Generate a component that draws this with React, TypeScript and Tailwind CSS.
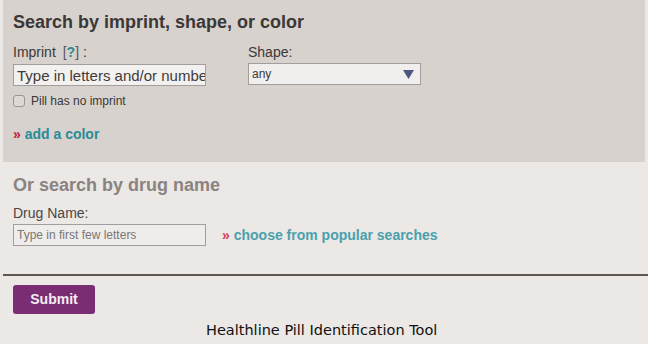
import React from "react";

export default function App() {
  return (
    <div
      className="w-[648px] h-[344px] overflow-hidden bg-[#ebe8e5] text-[#3b3836]"
      style={{ fontFamily: '"Liberation Sans", Arial, sans-serif' }}
    >
      <div className="mx-[3px] h-[162px] bg-[#d7d2ce] pl-[10px] pt-[11px]">
        <h2 className="text-[18px] leading-[22px] font-bold text-[#3b3836]">
          Search by imprint, shape, or color
        </h2>
        <div className="flex mt-[11px]">
          <div className="w-[235px]">
            <div className="text-[14px] leading-[16px] text-[#3b3836]">
              Imprint <span className="ml-[3px] text-[#5b5654]">[</span>
              <span className="font-bold text-[#2a8a96]">?</span>
              <span className="text-[#5b5654]">]</span> :
            </div>
            <input
              readOnly
              value="Type in letters and/or numbers"
              className="block mt-[4px] w-[193px] h-[22px] border border-[#a39e9b] bg-[#f3f1ef] pl-[3px] pr-0 text-[15px] leading-[20px] text-[#3f3c3a] outline-none"
              style={{ fontFamily: '"Liberation Sans", Arial, sans-serif' }}
            />
            <div className="flex items-center mt-[8px] h-[14px]">
              <div className="w-[12px] h-[12px] rounded-[3px] border border-[#9a9592] bg-[#dcd8d5]" />
              <span className="ml-[6px] text-[12px] text-[#3b3836]">Pill has no imprint</span>
            </div>
            <div className="mt-[18px] text-[14px] leading-[16px] font-bold">
              <span className="text-[#c0203a]">»</span>{" "}
              <span className="text-[#2a8a96]">add a color</span>
            </div>
          </div>
          <div>
            <div className="text-[14px] leading-[16px] text-[#3b3836]">Shape:</div>
            <div className="mt-[3px] w-[173px] h-[22px] border border-[#a39e9b] bg-[#f1efed] flex items-center justify-between pl-[3px] pr-[6px]">
              <span className="text-[12px] text-[#3b3836]">any</span>
              <svg width="11" height="9" viewBox="0 0 11 9">
                <polygon points="0,0 11,0 5.5,9" fill="#4d5780" />
              </svg>
            </div>
          </div>
        </div>
      </div>

      <div className="pl-[13px] pt-[12px]">
        <h2 className="text-[18px] leading-[22px] font-bold text-[#8a8381]">
          Or search by drug name
        </h2>
        <div className="mt-[9px] text-[14px] leading-[16px] text-[#4a4644]">Drug Name:</div>
        <div className="flex items-center mt-[3px]">
          <input
            readOnly
            placeholder="Type in first few letters"
            className="block w-[193px] h-[22px] border border-[#a39e9b] bg-[#efedeb] pl-[3px] text-[12px] leading-[20px] text-[#7a7674] placeholder:text-[#7a7674] outline-none"
            style={{ fontFamily: '"Liberation Sans", Arial, sans-serif' }}
          />
          <div className="ml-[16px] text-[14px] font-bold">
            <span className="text-[#d0406a]">»</span>{" "}
            <span className="text-[#4aa0ad]">choose from popular searches</span>
          </div>
        </div>
      </div>

      <div className="ml-[3px] mt-[28px] h-[2px] bg-[#5e5653]" />

      <div className="pl-[13px] mt-[9px]">
        <button className="w-[82px] h-[29px] rounded-[3px] bg-[#7b2d74] text-[#f3eef3] text-[14px] font-bold">
          Submit
        </button>
      </div>
      <div
        className="pl-[206px] mt-[7px] text-[14.5px] leading-[18px] text-[#111]"
        style={{ fontFamily: '"DejaVu Sans", Verdana, sans-serif' }}
      >
        Healthline Pill Identification Tool
      </div>
    </div>
  );
}
